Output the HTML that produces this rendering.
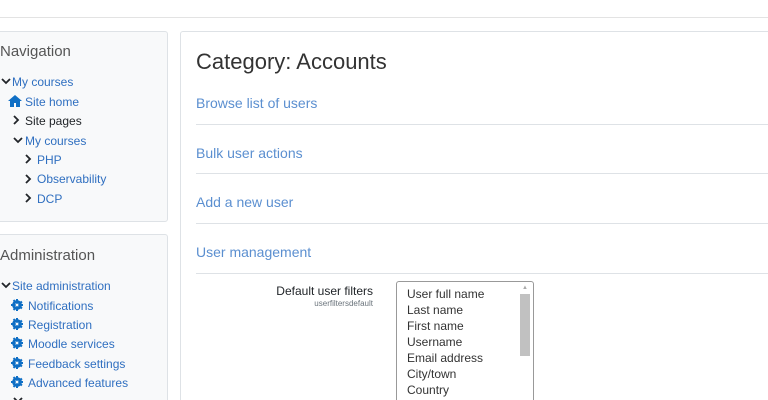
<!DOCTYPE html>
<html><head><style>
html,body{margin:0;width:768px;height:400px;overflow:hidden}
body{background:#fff;font-family:"Liberation Sans",sans-serif;position:relative}
.top{position:absolute;left:0;top:0;width:768px;height:17px;border-bottom:1px solid #e3e3e3}
.blk{position:absolute;background:#f8f9fa;border:1px solid #dee2e6;border-radius:3px}
.h{position:absolute;font-size:15px;color:#555}
.l{position:absolute;font-size:12px;color:#2f6fc0;white-space:nowrap}
.k{color:#212529}
.card{position:absolute;left:180px;top:31px;width:600px;height:400px;border:1px solid #dee2e6;border-radius:3px;background:#fff}
.t{position:absolute;left:196px;top:49px;font-size:22px;color:#333}
.ml{position:absolute;left:196px;font-size:14px;color:#5b8fd0}
.hr{position:absolute;left:196px;width:572px;height:1px;background:#dee2e6}
.sel{position:absolute;left:396px;top:281px;width:136px;height:140px;border:1px solid #999;border-radius:3px;background:#fff}
.o{position:absolute;left:407px;font-size:12px;color:#333}
.g{position:absolute;left:11px}
</style></head><body>
<div class="top"></div>
<div class="blk" style="left:-4px;top:31px;width:170px;height:189px"></div>
<div class="h" style="left:0;top:43px">Navigation</div>
<svg style="position:absolute;left:1px;top:77px" width="10" height="8"><path d="M1 2l4 4 4-4" stroke="#212529" stroke-width="1.8" fill="none"/></svg>
<div class="l" style="left:12px;top:75px">My courses</div>
<svg style="position:absolute;left:8px;top:95px" width="14" height="12"><path d="M7 0L0 6h2v6h4V8h2v4h4V6h2z" fill="#0f6fc5"/></svg>
<div class="l" style="left:25px;top:95px">Site home</div>
<svg style="position:absolute;left:13px;top:115px" width="7" height="10"><path d="M1 1l4 4-4 4" stroke="#212529" stroke-width="1.8" fill="none"/></svg>
<div class="l k" style="left:25px;top:114px">Site pages</div>
<svg style="position:absolute;left:13px;top:136px" width="10" height="8"><path d="M1 2l4 4 4-4" stroke="#212529" stroke-width="1.8" fill="none"/></svg>
<div class="l" style="left:25px;top:134px">My courses</div>
<svg style="position:absolute;left:25px;top:154px" width="7" height="10"><path d="M1 1l4 4-4 4" stroke="#212529" stroke-width="1.8" fill="none"/></svg>
<div class="l" style="left:37px;top:153px">PHP</div>
<svg style="position:absolute;left:25px;top:174px" width="7" height="10"><path d="M1 1l4 4-4 4" stroke="#212529" stroke-width="1.8" fill="none"/></svg>
<div class="l" style="left:37px;top:172px">Observability</div>
<svg style="position:absolute;left:25px;top:193px" width="7" height="10"><path d="M1 1l4 4-4 4" stroke="#212529" stroke-width="1.8" fill="none"/></svg>
<div class="l" style="left:37px;top:192px">DCP</div>

<div class="blk" style="left:-4px;top:234px;width:170px;height:200px"></div>
<div class="h" style="left:0;top:247px">Administration</div>
<svg style="position:absolute;left:1px;top:281px" width="10" height="8"><path d="M1 2l4 4 4-4" stroke="#212529" stroke-width="1.8" fill="none"/></svg>
<div class="l" style="left:12px;top:279px">Site administration</div>
<svg width="0" height="0" style="position:absolute"><defs><g id="gear"><circle cx="6" cy="6" r="3.6" fill="none" stroke="#0f6fc5" stroke-width="2.6"/><path d="M5 0h2v12H5zM0 5h12v2H0zM1.8 1.8l1.4-1.4 8.4 8.4-1.4 1.4zM10.2 1.8l1.4 1.4-8.4 8.4-1.4-1.4z" fill="#0f6fc5"/><circle cx="6" cy="6" r="1.4" fill="#f8f9fa"/></g></defs></svg>
<svg class="g" style="top:299px" width="12" height="12"><use href="#gear"/></svg>
<div class="l" style="left:28px;top:299px">Notifications</div>
<svg class="g" style="top:318px" width="12" height="12"><use href="#gear"/></svg>
<div class="l" style="left:28px;top:318px">Registration</div>
<svg class="g" style="top:337px" width="12" height="12"><use href="#gear"/></svg>
<div class="l" style="left:28px;top:337px">Moodle services</div>
<svg class="g" style="top:357px" width="12" height="12"><use href="#gear"/></svg>
<div class="l" style="left:28px;top:357px">Feedback settings</div>
<svg class="g" style="top:376px" width="12" height="12"><use href="#gear"/></svg>
<div class="l" style="left:28px;top:376px">Advanced features</div>
<svg style="position:absolute;left:13px;top:396px" width="10" height="8"><path d="M1 2l4 4 4-4" stroke="#212529" stroke-width="1.8" fill="none"/></svg>

<div class="card"></div>
<div class="t">Category: Accounts</div>
<div class="ml" style="top:95px">Browse list of users</div>
<div class="hr" style="top:124px"></div>
<div class="ml" style="top:145px">Bulk user actions</div>
<div class="hr" style="top:173px"></div>
<div class="ml" style="top:194px">Add a new user</div>
<div class="hr" style="top:223px"></div>
<div class="ml" style="top:244px">User management</div>
<div class="hr" style="top:273px"></div>
<div style="position:absolute;left:230px;width:143px;text-align:right;top:284px;font-size:12px;color:#212529">Default user filters</div>
<div style="position:absolute;left:230px;width:143px;text-align:right;top:299px;font-size:8px;color:#6a737b">userfiltersdefault</div>
<div class="sel"></div>
<div style="position:absolute;left:520px;top:294px;width:10px;height:62px;background:#c1c1c1"></div>
<div style="position:absolute;left:522px;top:285px;font-size:6px;color:#aaa">▲</div>
<div class="o" style="top:287px">User full name</div>
<div class="o" style="top:303px">Last name</div>
<div class="o" style="top:319px">First name</div>
<div class="o" style="top:335px">Username</div>
<div class="o" style="top:351px">Email address</div>
<div class="o" style="top:367px">City/town</div>
<div class="o" style="top:383px">Country</div>
</body></html>
